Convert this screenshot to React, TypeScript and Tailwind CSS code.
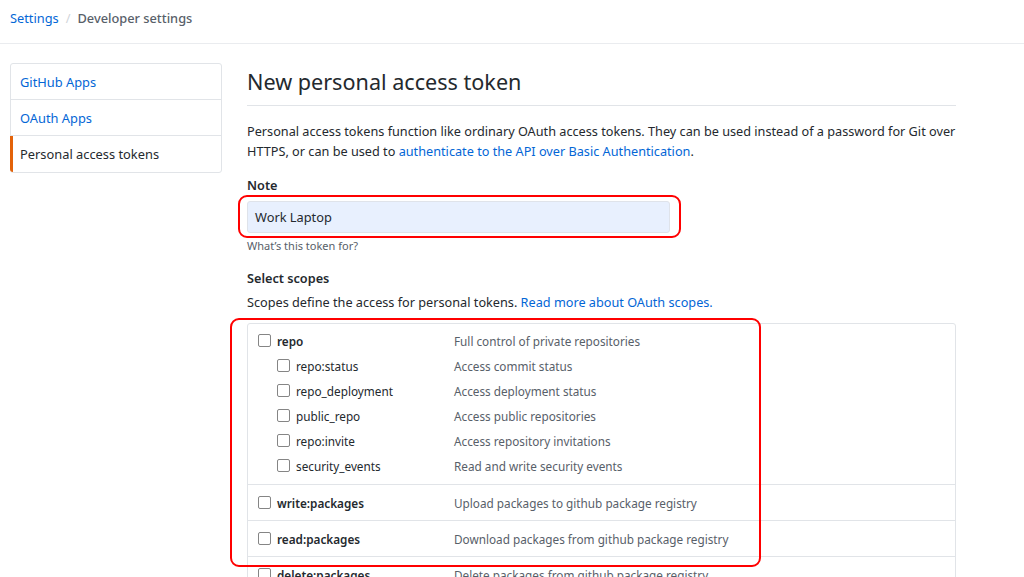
import React from 'react';

interface Scope {
  name: string;
  description: string;
  children?: { name: string; description: string }[];
}

const scopes: Scope[] = [
  {
    name: 'repo',
    description: 'Full control of private repositories',
    children: [
      { name: 'repo:status', description: 'Access commit status' },
      { name: 'repo_deployment', description: 'Access deployment status' },
      { name: 'public_repo', description: 'Access public repositories' },
      { name: 'repo:invite', description: 'Access repository invitations' },
      { name: 'security_events', description: 'Read and write security events' },
    ],
  },
  { name: 'write:packages', description: 'Upload packages to github package registry' },
  { name: 'read:packages', description: 'Download packages from github package registry' },
  { name: 'delete:packages', description: 'Delete packages from github package registry' },
];

const sideItems = [
  { label: 'GitHub Apps', active: false },
  { label: 'OAuth Apps', active: false },
  { label: 'Personal access tokens', active: true },
];

function Checkbox() {
  return <span className="w-[13px] h-[13px] shrink-0 border border-[#858585] rounded-[2px] bg-white" />;
}

function ScopeLine({ name, description, bold, indent }: { name: string; description: string; bold?: boolean; indent?: boolean }) {
  return (
    <div className="flex items-center h-[25px]">
      <div className={`flex items-center gap-[6px] w-[196px] shrink-0 ${indent ? 'pl-[19px]' : ''}`}>
        <Checkbox />
        <span className={bold ? 'font-semibold text-[#24292e]' : 'text-[#24292e]'}>{name}</span>
      </div>
      <span className="text-[#586069]">{description}</span>
    </div>
  );
}

export default function App() {
  return (
    <div
      className="w-[1024px] h-[577px] overflow-hidden bg-white text-[#24292e] text-[12.7px] leading-[20px]"
      style={{ fontFamily: '"Noto Sans", "Open Sans", sans-serif' }}
    >
      <div className="h-[44px] border-b border-[#eaecef] px-[10px] pt-[8px] flex items-start gap-[7px] text-[12.8px]">
        <span className="text-[#0366d6]">Settings</span>
        <span className="text-[#d1d5da]">/</span>
        <span className="text-[#586069] font-medium">Developer settings</span>
      </div>

      <div className="flex px-[10px]">
        <nav className="w-[212px] shrink-0 mt-[19px] border border-[#e1e4e8] rounded-[3px] self-start text-[12.85px]">
          {sideItems.map((item, i) => (
            <div
              key={item.label}
              className={`relative h-[36px] flex items-center pl-[9px] ${i < sideItems.length - 1 ? 'border-b border-[#e1e4e8]' : 'h-[35px]'} ${
                item.active ? 'text-[#24292e]' : 'text-[#0366d6]'
              }`}
            >
              {item.active && <span className="absolute left-[-1px] top-0 bottom-0 w-[3px] bg-[#e36209] rounded-bl-[3px]" />}
              {item.label}
            </div>
          ))}
        </nav>

        <main className="ml-[25px] w-[709px] pt-[20px]">
          <h1 className="text-[21.6px] leading-[36px] font-normal pb-[5px] border-b border-[#e1e4e8]">New personal access token</h1>

          <p className="mt-[15px]">
            Personal access tokens function like ordinary OAuth access tokens. They can be used instead of a password for Git over
            HTTPS, or can be used to <span className="text-[#0366d6]">authenticate to the API over Basic Authentication</span>.
          </p>

          <div className="mt-[14px] font-semibold">Note</div>
          <div className="relative mt-[6px] w-[423px]">
            <div className="h-[32px] rounded-[3px] border border-[#dfe3ea] bg-[#e8f0fe] px-[7px] flex items-center text-[12.8px]">
              Work Laptop
            </div>
            <span className="absolute left-[-9px] right-[-11px] top-[-6px] bottom-[-5px] border-2 border-[#f00] rounded-[9px]" />
          </div>
          <div className="mt-[4px] text-[11px] leading-[18px] text-[#586069]">What’s this token for?</div>

          <div className="mt-[13px] font-semibold">Select scopes</div>
          <div className="mt-[4px]">
            Scopes define the access for personal tokens. <span className="text-[#0366d6]">Read more about OAuth scopes.</span>
          </div>

          <div className="relative mt-[11px] border border-[#e1e4e8] rounded-t-[3px] text-[11.75px]">
            {scopes.map((scope, i) => (
              <div key={scope.name} className={`px-[10px] ${i > 0 ? 'border-t border-[#e1e4e8] py-[5px]' : 'pt-[4px] pb-[6px]'}`}>
                <ScopeLine name={scope.name} description={scope.description} bold />
                {scope.children?.map((c) => (
                  <ScopeLine key={c.name} name={c.name} description={c.description} indent />
                ))}
              </div>
            ))}
            <span className="absolute left-[-18px] top-[-6px] w-[531px] h-[249px] border-2 border-[#f00] rounded-[9px]" />
          </div>
        </main>
      </div>
    </div>
  );
}
